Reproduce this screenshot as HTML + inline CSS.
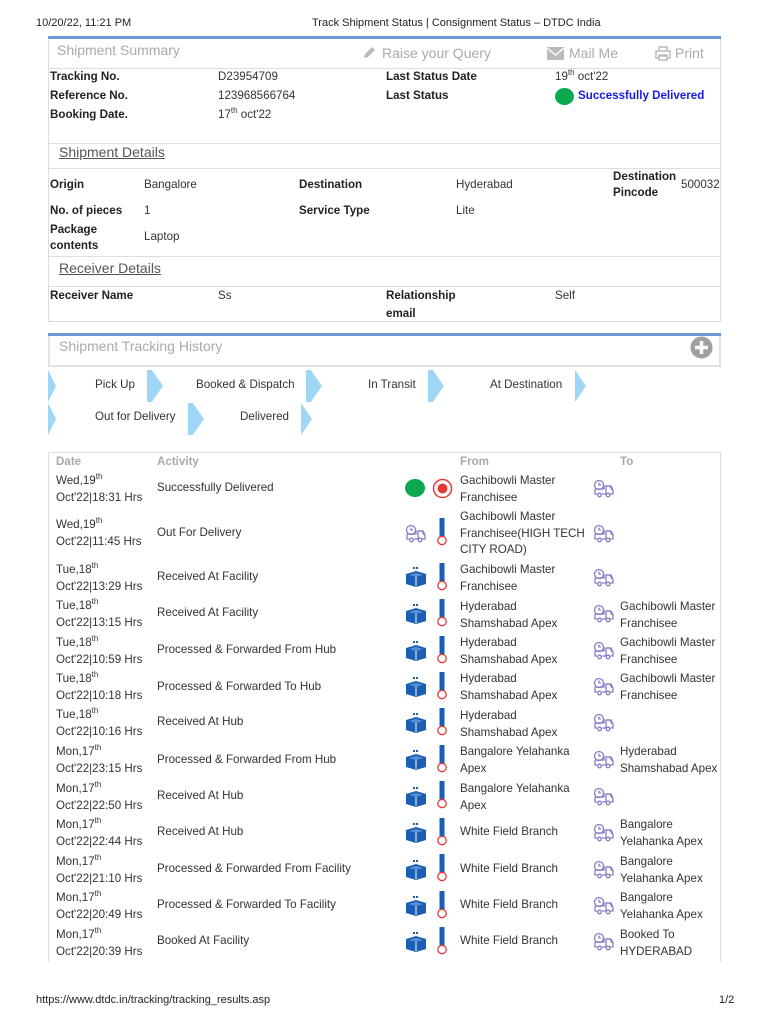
<!DOCTYPE html>
<html><head><meta charset="utf-8">
<style>
*{margin:0;padding:0;box-sizing:border-box}
body{width:768px;height:1024px;background:#fff;font-family:"Liberation Sans",Arial,sans-serif;color:#333;position:relative;overflow:hidden;font-size:11.6px}
.a{position:absolute;white-space:nowrap;line-height:14px}
.b{font-weight:bold;color:#222}
.g{color:#aaa}
.box{position:absolute;border:1px solid #ddd}
sup{font-size:8px;vertical-align:5px;line-height:0}
.chev{position:absolute;width:16px;height:32px;background:#9fd6f5;clip-path:polygon(0 0,30% 0,100% 50%,30% 100%,0 100%,0 0,0 0)}
.chev2{position:absolute;width:16px;height:32px;background:#9fd6f5;clip-path:polygon(0 0,100% 50%,0 100%)}
svg.i{position:absolute}
</style></head><body>
<svg width="0" height="0" style="position:absolute">
<defs>
<symbol id="tr" viewBox="0 0 22 20"><g fill="none" stroke="#8a7cc8" stroke-width="1.3"><circle cx="6" cy="6" r="4.5"/><path d="M6 3.5V6h2"/><path d="M2 10v5h2M9 15h4M17 15h3v-4l-2-4h-5v8M11 6v4H2"/><path d="M13 7h4l2 4"/><circle cx="6.5" cy="16" r="1.8"/><circle cx="15" cy="16" r="1.8"/></g></symbol>
<symbol id="bx" viewBox="0 0 22 20"><g fill="#1a5fb4"><path d="M1 7l10-3 10 3v10l-10 3-10-3z"/></g><g fill="#fff"><path d="M10.5 9h1v10h-1z"/><path d="M4 8l7-2 7 2-7 2z" fill="#5b8fd6"/></g><g fill="#1a5fb4"><rect x="8" y="0" width="2" height="2"/><rect x="11" y="0" width="2" height="2"/></g></symbol>
<symbol id="th" viewBox="0 0 12 28"><rect x="3.5" y="0" width="5" height="20" fill="#1a5fb4"/><circle cx="6" cy="22.5" r="4.2" fill="#fff" stroke="#e53935" stroke-width="1.3"/></symbol>
</defs></svg>

<div class="a" style="left:36px;top:16px;font-size:11px;color:#222">10/20/22, 11:21 PM</div>
<div class="a" style="left:312px;top:16px;font-size:11px;color:#222">Track Shipment Status | Consignment Status – DTDC India</div>

<div style="position:absolute;left:48px;top:36px;width:673px;height:3px;background:#6a9ad0"></div>
<div class="box" style="left:48px;top:39px;width:673px;height:283px;border-top:none"></div>
<div style="position:absolute;left:48px;top:68px;width:673px;height:1px;background:#ddd"></div>
<div class="a g" style="left:57px;top:43px;font-size:14px">Shipment Summary</div>
<svg class="i" style="left:362px;top:46px" width="14" height="14" viewBox="0 0 14 14"><path d="M2 12l1-4 7-7 3 3-7 7z" fill="#bbb"/></svg>
<div class="a g" style="left:382px;top:46px;font-size:14px">Raise your Query</div>
<svg class="i" style="left:547px;top:47px" width="17" height="13" viewBox="0 0 17 13"><rect width="17" height="13" fill="#bbb"/><path d="M0 1l8.5 7L17 1" fill="none" stroke="#fff" stroke-width="1.3"/></svg>
<div class="a g" style="left:569px;top:46px;font-size:14px">Mail Me</div>
<svg class="i" style="left:655px;top:46px" width="16" height="15" viewBox="0 0 16 15"><path d="M4 1h8v4H4z M1 5h14v7h-3v-3H4v3H1z M4 10h8v4H4z" fill="none" stroke="#bbb" stroke-width="1.5"/></svg>
<div class="a g" style="left:675px;top:46px;font-size:14px">Print</div>

<div class="a b" style="left:50px;top:70px">Tracking No.</div>
<div class="a" style="left:218px;top:70px">D23954709</div>
<div class="a b" style="left:386px;top:70px">Last Status Date</div>
<div class="a" style="left:555px;top:70px">19<sup>th</sup> oct'22</div>
<div class="a b" style="left:50px;top:89px">Reference No.</div>
<div class="a" style="left:218px;top:89px">123968566764</div>
<div class="a b" style="left:386px;top:89px">Last Status</div>
<div style="position:absolute;left:555px;top:88px;width:19px;height:17px;border-radius:50%;background:#0aa84f"></div>
<div class="a b" style="left:578px;top:89px;color:#1a1ae6">Successfully Delivered</div>
<div class="a b" style="left:50px;top:108px">Booking Date.</div>
<div class="a" style="left:218px;top:108px">17<sup>th</sup> oct'22</div>

<div class="box" style="left:48px;top:143px;width:673px;height:26px"></div>
<div class="a" style="left:59px;top:145px;font-size:14px;text-decoration:underline;color:#555">Shipment Details</div>
<div class="a b" style="left:50px;top:178px">Origin</div>
<div class="a" style="left:144px;top:178px">Bangalore</div>
<div class="a b" style="left:299px;top:178px">Destination</div>
<div class="a" style="left:456px;top:178px">Hyderabad</div>
<div class="a b" style="left:613px;top:169px;line-height:16px">Destination<br>Pincode</div>
<div class="a" style="left:681px;top:178px">500032</div>
<div class="a b" style="left:50px;top:204px">No. of pieces</div>
<div class="a" style="left:144px;top:204px">1</div>
<div class="a b" style="left:299px;top:204px">Service Type</div>
<div class="a" style="left:456px;top:204px">Lite</div>
<div class="a b" style="left:50px;top:222px;line-height:16px">Package<br>contents</div>
<div class="a" style="left:144px;top:230px">Laptop</div>

<div class="box" style="left:48px;top:256px;width:673px;height:31px"></div>
<div class="a" style="left:59px;top:261px;font-size:14px;text-decoration:underline;color:#555">Receiver Details</div>
<div class="a b" style="left:50px;top:289px">Receiver Name</div>
<div class="a" style="left:218px;top:289px">Ss</div>
<div class="a b" style="left:386px;top:289px">Relationship</div>
<div class="a" style="left:555px;top:289px">Self</div>
<div class="a b" style="left:386px;top:307px">email</div>

<div style="position:absolute;left:48px;top:333px;width:673px;height:3px;background:#6a9ad0"></div>
<div class="box" style="left:48px;top:336px;width:673px;height:31px;border-width:2px;border-color:#e2e2e2;border-top:none"></div>
<div class="a g" style="left:59px;top:339px;font-size:14px">Shipment Tracking History</div>
<svg class="i" style="left:690px;top:336px" width="23" height="23" viewBox="0 0 23 23"><circle cx="11.5" cy="11.5" r="11" fill="#a0a0a0"/><path d="M11.5 5v13M5 11.5h13" stroke="#fff" stroke-width="3.5"/></svg>

<div class="chev" style="left:48px;top:370px;width:8px;clip-path:polygon(0 0,100% 50%,0 100%)"></div>
<div class="chev" style="left:48px;top:403px;width:8px;clip-path:polygon(0 0,100% 50%,0 100%)"></div>
<div class="a" style="left:95px;top:378px">Pick Up</div>
<div class="chev" style="left:147px;top:370px"></div>
<div class="a" style="left:196px;top:378px">Booked &amp; Dispatch</div>
<div class="chev" style="left:306px;top:370px"></div>
<div class="a" style="left:368px;top:378px">In Transit</div>
<div class="chev" style="left:428px;top:370px"></div>
<div class="a" style="left:490px;top:378px">At Destination</div>
<div class="chev2" style="left:575px;top:370px;width:11px"></div>
<div class="a" style="left:95px;top:410px">Out for Delivery</div>
<div class="chev" style="left:188px;top:403px"></div>
<div class="a" style="left:240px;top:410px">Delivered</div>
<div class="chev2" style="left:301px;top:403px;width:11px"></div>

<div style="position:absolute;left:48px;top:452px;width:673px;height:1px;background:#ddd"></div>
<div style="position:absolute;left:48px;top:452px;width:1px;height:510px;background:#ddd"></div>
<div style="position:absolute;left:720px;top:452px;width:1px;height:510px;background:#ddd"></div>
<div class="a b g" style="left:56px;top:455px;color:#aaa">Date</div>
<div class="a b g" style="left:157px;top:455px;color:#aaa">Activity</div>
<div class="a b g" style="left:460px;top:455px;color:#aaa">From</div>
<div class="a b g" style="left:620px;top:455px;color:#aaa">To</div>

<!-- R1 -->
<div class="a" style="left:56px;top:472px;line-height:17px">Wed,19<sup>th</sup><br>Oct'22|18:31 Hrs</div>
<div class="a" style="left:157px;top:481px">Successfully Delivered</div>
<div style="position:absolute;left:405px;top:479px;width:20px;height:18px;border-radius:50%;background:#0aa84f"></div>
<svg class="i" style="left:432px;top:478px" width="21" height="21" viewBox="0 0 21 21"><circle cx="10.5" cy="10.5" r="9" fill="#fff" stroke="#e53935" stroke-width="1.5"/><circle cx="10.5" cy="10.5" r="5" fill="#e53935"/></svg>
<div class="a" style="left:460px;top:472px;line-height:17px">Gachibowli Master<br>Franchisee</div>
<svg class="i" style="left:593px;top:479px" width="22" height="20"><use href="#tr"/></svg>
<!-- R2 -->
<div class="a" style="left:56px;top:516px;line-height:17px">Wed,19<sup>th</sup><br>Oct'22|11:45 Hrs</div>
<div class="a" style="left:157px;top:526px">Out For Delivery</div>
<svg class="i" style="left:405px;top:524px" width="22" height="20"><use href="#tr"/></svg>
<svg class="i" style="left:436px;top:518px" width="12" height="28"><use href="#th"/></svg>
<div class="a" style="left:460px;top:509px;line-height:16.5px">Gachibowli Master<br>Franchisee(HIGH TECH<br>CITY ROAD)</div>
<svg class="i" style="left:593px;top:524px" width="22" height="20"><use href="#tr"/></svg>
<!-- R3 -->
<div class="a" style="left:56px;top:561px;line-height:17px">Tue,18<sup>th</sup><br>Oct'22|13:29 Hrs</div>
<div class="a" style="left:157px;top:570px">Received At Facility</div>
<svg class="i" style="left:405px;top:567px" width="22" height="20"><use href="#bx"/></svg>
<svg class="i" style="left:436px;top:563px" width="12" height="28"><use href="#th"/></svg>
<div class="a" style="left:460px;top:561px;line-height:17px">Gachibowli Master<br>Franchisee</div>
<svg class="i" style="left:593px;top:568px" width="22" height="20"><use href="#tr"/></svg>
<!-- R4 -->
<div class="a" style="left:56px;top:597px;line-height:17px">Tue,18<sup>th</sup><br>Oct'22|13:15 Hrs</div>
<div class="a" style="left:157px;top:606px">Received At Facility</div>
<svg class="i" style="left:405px;top:604px" width="22" height="20"><use href="#bx"/></svg>
<svg class="i" style="left:436px;top:599px" width="12" height="28"><use href="#th"/></svg>
<div class="a" style="left:460px;top:598px;line-height:17px">Hyderabad<br>Shamshabad Apex</div>
<svg class="i" style="left:593px;top:604px" width="22" height="20"><use href="#tr"/></svg>
<div class="a" style="left:620px;top:598px;line-height:17px">Gachibowli Master<br>Franchisee</div>
<!-- R5 -->
<div class="a" style="left:56px;top:634px;line-height:17px">Tue,18<sup>th</sup><br>Oct'22|10:59 Hrs</div>
<div class="a" style="left:157px;top:643px">Processed &amp; Forwarded From Hub</div>
<svg class="i" style="left:405px;top:641px" width="22" height="20"><use href="#bx"/></svg>
<svg class="i" style="left:436px;top:636px" width="12" height="28"><use href="#th"/></svg>
<div class="a" style="left:460px;top:634px;line-height:17px">Hyderabad<br>Shamshabad Apex</div>
<svg class="i" style="left:593px;top:641px" width="22" height="20"><use href="#tr"/></svg>
<div class="a" style="left:620px;top:634px;line-height:17px">Gachibowli Master<br>Franchisee</div>
<!-- R6 -->
<div class="a" style="left:56px;top:670px;line-height:17px">Tue,18<sup>th</sup><br>Oct'22|10:18 Hrs</div>
<div class="a" style="left:157px;top:680px">Processed &amp; Forwarded To Hub</div>
<svg class="i" style="left:405px;top:677px" width="22" height="20"><use href="#bx"/></svg>
<svg class="i" style="left:436px;top:672px" width="12" height="28"><use href="#th"/></svg>
<div class="a" style="left:460px;top:670px;line-height:17px">Hyderabad<br>Shamshabad Apex</div>
<svg class="i" style="left:593px;top:677px" width="22" height="20"><use href="#tr"/></svg>
<div class="a" style="left:620px;top:670px;line-height:17px">Gachibowli Master<br>Franchisee</div>
<!-- R7 -->
<div class="a" style="left:56px;top:706px;line-height:17px">Tue,18<sup>th</sup><br>Oct'22|10:16 Hrs</div>
<div class="a" style="left:157px;top:715px">Received At Hub</div>
<svg class="i" style="left:405px;top:713px" width="22" height="20"><use href="#bx"/></svg>
<svg class="i" style="left:436px;top:708px" width="12" height="28"><use href="#th"/></svg>
<div class="a" style="left:460px;top:707px;line-height:17px">Hyderabad<br>Shamshabad Apex</div>
<svg class="i" style="left:593px;top:713px" width="22" height="20"><use href="#tr"/></svg>
<!-- R8 -->
<div class="a" style="left:56px;top:743px;line-height:17px">Mon,17<sup>th</sup><br>Oct'22|23:15 Hrs</div>
<div class="a" style="left:157px;top:753px">Processed &amp; Forwarded From Hub</div>
<svg class="i" style="left:405px;top:750px" width="22" height="20"><use href="#bx"/></svg>
<svg class="i" style="left:436px;top:745px" width="12" height="28"><use href="#th"/></svg>
<div class="a" style="left:460px;top:743px;line-height:17px">Bangalore Yelahanka<br>Apex</div>
<svg class="i" style="left:593px;top:750px" width="22" height="20"><use href="#tr"/></svg>
<div class="a" style="left:620px;top:743px;line-height:17px">Hyderabad<br>Shamshabad Apex</div>
<!-- R9 -->
<div class="a" style="left:56px;top:780px;line-height:17px">Mon,17<sup>th</sup><br>Oct'22|22:50 Hrs</div>
<div class="a" style="left:157px;top:789px">Received At Hub</div>
<svg class="i" style="left:405px;top:787px" width="22" height="20"><use href="#bx"/></svg>
<svg class="i" style="left:436px;top:781px" width="12" height="28"><use href="#th"/></svg>
<div class="a" style="left:460px;top:780px;line-height:17px">Bangalore Yelahanka<br>Apex</div>
<svg class="i" style="left:593px;top:787px" width="22" height="20"><use href="#tr"/></svg>
<!-- R10 -->
<div class="a" style="left:56px;top:816px;line-height:17px">Mon,17<sup>th</sup><br>Oct'22|22:44 Hrs</div>
<div class="a" style="left:157px;top:825px">Received At Hub</div>
<svg class="i" style="left:405px;top:823px" width="22" height="20"><use href="#bx"/></svg>
<svg class="i" style="left:436px;top:818px" width="12" height="28"><use href="#th"/></svg>
<div class="a" style="left:460px;top:825px">White Field Branch</div>
<svg class="i" style="left:593px;top:823px" width="22" height="20"><use href="#tr"/></svg>
<div class="a" style="left:620px;top:816px;line-height:17px">Bangalore<br>Yelahanka Apex</div>
<!-- R11 -->
<div class="a" style="left:56px;top:853px;line-height:17px">Mon,17<sup>th</sup><br>Oct'22|21:10 Hrs</div>
<div class="a" style="left:157px;top:862px">Processed &amp; Forwarded From Facility</div>
<svg class="i" style="left:405px;top:860px" width="22" height="20"><use href="#bx"/></svg>
<svg class="i" style="left:436px;top:854px" width="12" height="28"><use href="#th"/></svg>
<div class="a" style="left:460px;top:862px">White Field Branch</div>
<svg class="i" style="left:593px;top:860px" width="22" height="20"><use href="#tr"/></svg>
<div class="a" style="left:620px;top:853px;line-height:17px">Bangalore<br>Yelahanka Apex</div>
<!-- R12 -->
<div class="a" style="left:56px;top:889px;line-height:17px">Mon,17<sup>th</sup><br>Oct'22|20:49 Hrs</div>
<div class="a" style="left:157px;top:898px">Processed &amp; Forwarded To Facility</div>
<svg class="i" style="left:405px;top:896px" width="22" height="20"><use href="#bx"/></svg>
<svg class="i" style="left:436px;top:891px" width="12" height="28"><use href="#th"/></svg>
<div class="a" style="left:460px;top:898px">White Field Branch</div>
<svg class="i" style="left:593px;top:896px" width="22" height="20"><use href="#tr"/></svg>
<div class="a" style="left:620px;top:889px;line-height:17px">Bangalore<br>Yelahanka Apex</div>
<!-- R13 -->
<div class="a" style="left:56px;top:926px;line-height:17px">Mon,17<sup>th</sup><br>Oct'22|20:39 Hrs</div>
<div class="a" style="left:157px;top:934px">Booked At Facility</div>
<svg class="i" style="left:405px;top:932px" width="22" height="20"><use href="#bx"/></svg>
<svg class="i" style="left:436px;top:927px" width="12" height="28"><use href="#th"/></svg>
<div class="a" style="left:460px;top:934px">White Field Branch</div>
<svg class="i" style="left:593px;top:932px" width="22" height="20"><use href="#tr"/></svg>
<div class="a" style="left:620px;top:926px;line-height:17px">Booked To<br>HYDERABAD</div>

<div class="a" style="left:36px;top:993px;font-size:11px;color:#222">https://www.dtdc.in/tracking/tracking_results.asp</div>
<div class="a" style="left:719px;top:993px;font-size:11px;color:#222">1/2</div>
</body></html>
